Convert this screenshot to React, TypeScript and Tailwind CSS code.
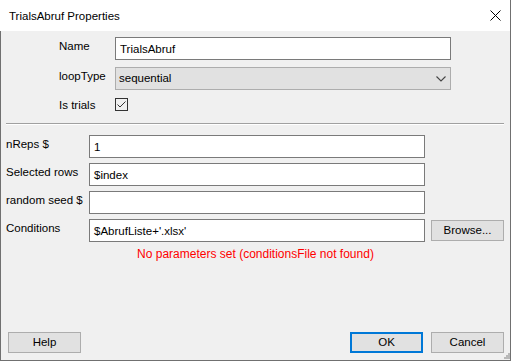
import React from "react";

const inputCls =
  "h-[23px] border border-[#7a7a7a] bg-white px-[4px] flex items-center leading-[16px]";

const Field = ({ value, width = "w-[336px]" }: { value: string; width?: string }) => {
  return <div className={`${inputCls} ${width}`}>{value}</div>;
};

const Btn = ({ label, primary }: { label: string; primary?: boolean }) => {
  return (
    <div
      className={
        primary
          ? "w-[73px] h-[21px] bg-[#e1e1e1] border-2 border-[#0078d7] flex items-center justify-center"
          : "w-[73px] h-[21px] bg-[#e1e1e1] border border-[#adadad] flex items-center justify-center"
      }>
      {label}
    </div>
  );
};

const App = () => {
  const rows = [
    { label: "nReps $", value: "1" },
    { label: "Selected rows", value: "$index" },
    { label: "random seed $", value: "" },
  ];

  return (
    <div className="w-[511px] h-[361px] flex flex-col font-['Liberation_Sans',Arial,sans-serif] text-[11.5px] text-black">
      {/* title bar */}
      <div className="h-[31px] shrink-0 bg-white flex items-center justify-between pl-[9px] pr-[9px] border-r border-[#707070]">
        <span className="leading-[16px]">TrialsAbruf Properties</span>
        <svg width="11" height="11" viewBox="0 0 11 11">
          <path d="M0.5 0.5 L10.5 10.5 M10.5 0.5 L0.5 10.5" stroke="#000" strokeWidth="1" fill="none" />
        </svg>
      </div>

      {/* body */}
      <div className="relative flex-1 flex flex-col bg-[#f0f0f0] border-l border-r border-b border-[#707070]">
        <div className="pl-[58px] pt-[6px] flex flex-col gap-[7px]">
          <div className="flex items-start">
            <span className="w-[56px] leading-[16px] pt-[1px]">Name</span>
            <Field value="TrialsAbruf" />
          </div>
          <div className="flex items-start">
            <span className="w-[56px] leading-[16px] pt-[1px]">loopType</span>
            <div className="w-[336px] h-[23px] bg-[#e1e1e1] border border-[#adadad] pl-[3px] pr-[3px] flex items-center justify-between">
              <span>sequential</span>
              <svg width="10" height="6" viewBox="0 0 10 6" className="mr-[1px]">
                <path d="M0.5 0.5 L5 5 L9.5 0.5" stroke="#444" strokeWidth="1.1" fill="none" />
              </svg>
            </div>
          </div>
          <div className="flex items-start">
            <span className="w-[56px] leading-[16px]">Is trials</span>
            <div className="mt-[1px] w-[13px] h-[13px] border border-[#333] bg-transparent flex items-center justify-center">
              <svg width="11" height="11" viewBox="0 0 11 11">
                <path d="M1.5 5.5 L4 8 L9.5 2.5" stroke="#333" strokeWidth="1" fill="none" />
              </svg>
            </div>
          </div>
        </div>

        {/* etched separator */}
        <div className="mt-[10px] ml-[5px] mr-[6px]">
          <div className="h-px bg-[#a0a0a0]" />
          <div className="h-px bg-white" />
        </div>

        <div className="pl-[5px] pt-[10px] flex flex-col gap-[5px]">
          {rows.map((row, index) => {
            return (
              <div key={index} className="flex items-start">
                <span className="w-[83px] leading-[16px] pt-[1px]">{row.label}</span>
                <Field value={row.value} />
              </div>
            );
          })}
          <div className="flex items-start">
            <span className="w-[83px] leading-[16px] pt-[1px]">Conditions</span>
            <Field value="$AbrufListe+'.xlsx'" />
            <div className="ml-[6px] mt-[1px] w-[73px] h-[21px] bg-[#e1e1e1] border border-[#adadad] flex items-center justify-center">
              Browse...
            </div>
          </div>
        </div>

        <div className="mt-[4px] text-center text-[12px] text-[#ff0000] leading-[16px]">
          No parameters set (conditionsFile not found)
        </div>

        <div className="flex-1" />

        <div className="flex items-center pl-[7px] pr-[6px] pb-[7px]">
          <Btn label="Help" />
          <div className="flex-1" />
          <Btn label="OK" primary />
          <div className="w-[8px]" />
          <Btn label="Cancel" />
        </div>

        {/* size grip */}
        <svg width="7" height="7" viewBox="0 0 7 7" className="absolute right-0 bottom-0">
          <rect x="5" y="0" width="2" height="2" fill="#b8b8b8" />
          <rect x="3" y="2" width="2" height="2" fill="#b8b8b8" />
          <rect x="5" y="2" width="2" height="2" fill="#b8b8b8" />
          <rect x="1" y="4" width="2" height="2" fill="#b8b8b8" />
          <rect x="3" y="4" width="2" height="2" fill="#b8b8b8" />
          <rect x="5" y="4" width="2" height="2" fill="#b8b8b8" />
        </svg>
      </div>
    </div>
  );
};

export default App;
